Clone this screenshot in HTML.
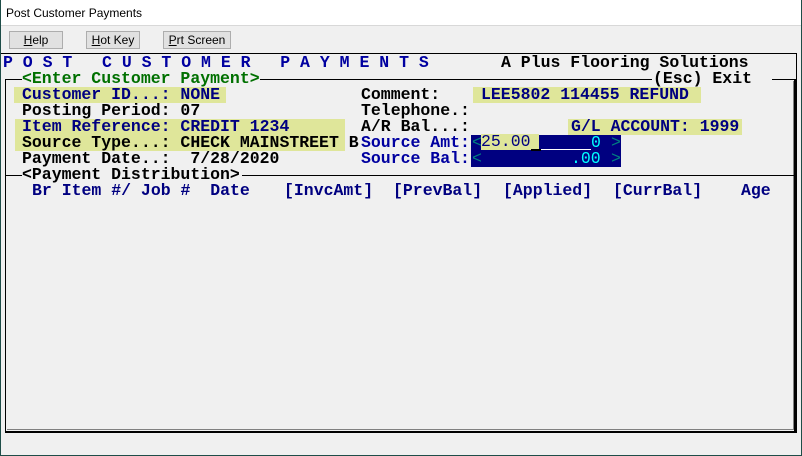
<!DOCTYPE html>
<html><head><meta charset="utf-8"><style>
*{margin:0;padding:0;box-sizing:border-box}
body{width:802px;height:456px;position:relative;background:#f0f0f0;overflow:hidden;font-family:"Liberation Sans",sans-serif}
.win{position:absolute;left:0;top:0;width:802px;height:456px;border:1px solid #1e4d48;border-top:none}
.tb{position:absolute;left:1px;top:0;width:800px;height:26px;background:#fff;border-bottom:1px solid #d8d8d8;font-size:12px;line-height:26px;padding-left:5px;color:#000}
.btn{position:absolute;top:31px;height:18px;background:#e1e1e1;border:1px solid #adadad;font-size:12px;line-height:16px;text-align:center;color:#000}
.t{position:absolute;font-family:"Liberation Mono",monospace;font-weight:bold;font-size:16.5px;line-height:16px;white-space:pre;color:#000}
.n{color:#000080}.g{color:#007000}.bl{color:#0000a0}
.hl{position:absolute;background:#dfe69a}
.ln{position:absolute;background:#000}
</style></head><body>
<div class="win"></div>
<div class="tb">Post Customer Payments</div>
<div class="btn" style="left:9px;width:54px"><u>H</u>elp</div>
<div class="btn" style="left:86px;width:54px"><u>H</u>ot Key</div>
<div class="btn" style="left:163px;width:68px"><u>P</u>rt Screen</div>

<div class="ln" style="left:1px;top:53px;width:796px;height:1px"></div>
<div class="ln" style="left:796px;top:53px;width:1px;height:380px"></div>
<!-- box -->
<div style="position:absolute;left:5px;top:79px;width:791px;height:354px;border:1px solid #000;border-right:2px solid #000;border-bottom:2px solid #000"></div>
<div style="position:absolute;left:7px;top:81px;width:787px;height:349px;border-right:1px solid #808080;border-bottom:1px solid #808080"></div>
<div class="ln" style="left:5px;top:175px;width:791px;height:1px"></div>
<div style="position:absolute;left:22px;top:70px;width:238px;height:18px;background:#f0f0f0"></div>
<div style="position:absolute;left:652px;top:70px;width:120px;height:18px;background:#f0f0f0"></div>
<div style="position:absolute;left:22px;top:166px;width:220px;height:18px;background:#f0f0f0"></div>

<div class="hl" style="left:14px;top:87px;width:212px;height:16px"></div>
<div class="hl" style="left:15px;top:119px;width:330px;height:32px"></div>
<div class="hl" style="left:473px;top:87px;width:228px;height:16px"></div>
<div class="hl" style="left:568px;top:119px;width:174px;height:16px"></div>
<div style="position:absolute;left:471px;top:135px;width:150px;height:32px;background:#000080"></div>
<div class="hl" style="left:481px;top:134px;width:58px;height:16px"></div>
<div style="position:absolute;left:541px;top:149px;width:50px;height:1px;background:#fff"></div>
<div style="position:absolute;left:531px;top:149px;width:10px;height:2px;background:#000"></div>

<div class="t bl" style="left:3px;top:55px">P O S T   C U S T O M E R   P A Y M E N T S</div>
<div class="t" style="left:501px;top:55px">A Plus Flooring Solutions</div>
<div class="t g" style="left:22px;top:71px">&lt;Enter Customer Payment&gt;</div>
<div class="t" style="left:653px;top:71px">(Esc) Exit</div>

<div class="t n" style="left:22px;top:87px">Customer ID...: NONE</div>
<div class="t" style="left:22px;top:103px">Posting Period: 07</div>
<div class="t n" style="left:22px;top:119px">Item Reference: CREDIT 1234</div>
<div class="t" style="left:22px;top:135px">Source Type...: CHECK MAINSTREET B</div>
<div class="t bl" style="left:361px;top:135px">Source Amt:</div>
<div class="t" style="left:22px;top:151px">Payment Date..:  7/28/2020</div>
<div class="t bl" style="left:361px;top:151px">Source Bal:</div>

<div class="t" style="left:361px;top:87px">Comment:</div>
<div class="t n" style="left:481px;top:87px">LEE5802 114455 REFUND</div>
<div class="t" style="left:361px;top:103px">Telephone.:</div>
<div class="t" style="left:361px;top:119px">A/R Bal...:</div>
<div class="t n" style="left:571px;top:119px">G/L ACCOUNT: 1999</div>

<div class="t" style="left:472px;top:135px;color:#008080;font-weight:normal">&lt;</div>
<div class="t n" style="left:481px;top:134px;font-weight:normal">25.00</div>
<div class="t" style="left:591px;top:135px;color:#00ffff;font-weight:normal">0</div>
<div class="t" style="left:611px;top:135px;color:#008080;font-weight:normal">&gt;</div>
<div class="t" style="left:472px;top:151px;color:#008080;font-weight:normal">&lt;</div>
<div class="t" style="left:571px;top:151px;color:#00ffff;font-weight:normal">.00</div>
<div class="t" style="left:611px;top:151px;color:#008080;font-weight:normal">&gt;</div>

<div class="t" style="left:22px;top:167px">&lt;Payment Distribution&gt;</div>
<div class="t n" style="left:32px;top:183px">Br Item #/ Job #  Date</div>
<div class="t n" style="left:284px;top:183px">[InvcAmt]</div>
<div class="t n" style="left:393px;top:183px">[PrevBal]</div>
<div class="t n" style="left:503px;top:183px">[Applied]</div>
<div class="t n" style="left:613px;top:183px">[CurrBal]</div>
<div class="t n" style="left:741px;top:183px">Age</div>
</body></html>
